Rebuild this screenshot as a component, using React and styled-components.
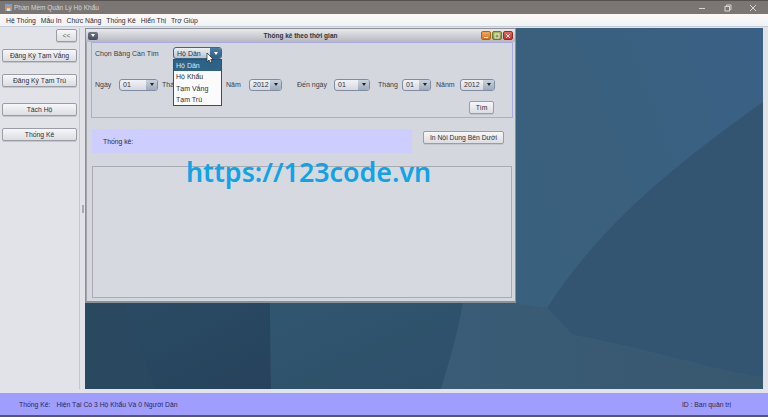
import React from 'react';
import styled, { createGlobalStyle } from 'styled-components';

const GlobalStyle = createGlobalStyle`
  html, body { margin: 0; padding: 0; width: 768px; height: 417px; overflow: hidden; }
  body { font-family: "Liberation Sans", Arial, sans-serif; background: #e4e5ea; }
  * { box-sizing: border-box; }
`;

const Frame = styled.div`
  width: 768px;
  height: 417px;
  position: relative;
  display: flex;
  flex-direction: column;
  background: #e2e3e8;
  color: #2b2f3a;
  font-size: 6.8px;
`;

const TitleBar = styled.div`
  height: 14px;
  flex: none;
  background: #7b7674;
  border-top: 1px solid #55514f;
  display: flex;
  align-items: center;
  padding: 0 11px 0 5px;
  gap: 2px;
  color: #d8d4d1;
`;

const AppTitle = styled.span`
  flex: 1;
  font-size: 6.5px;
`;

const WinIcons = styled.div`
  display: flex;
  align-items: center;
  gap: 17.5px;
  color: #d6d4d2;
`;

const MenuBar = styled.div`
  height: 13px;
  flex: none;
  background: linear-gradient(#fdf9f7, #f0f2f5);
  display: flex;
  align-items: center;
  gap: 5px;
  padding-left: 6px;
  font-size: 6.8px;
  border-bottom: 1px solid #c3cdd8;
`;

const Body = styled.div`
  flex: 1;
  display: flex;
  min-height: 0;
  padding-top: 1px;
  padding-bottom: 4px;
`;

const Sidebar = styled.div`
  width: 80px;
  flex: none;
  display: flex;
  flex-direction: column;
  align-items: stretch;
  padding: 1px 2px 0 2px;
  border-right: 1px solid #c6c7cc;
`;

const Btn = styled.div`
  display: flex;
  align-items: center;
  justify-content: center;
  background: linear-gradient(#f7f7f9, #dcdde2);
  border: 1px solid #9a9da5;
  border-radius: 2px;
  box-shadow: 0 1px 0 #c4c6cc;
  color: #2b2f3a;
  font-size: 6.8px;
  white-space: nowrap;
`;

const CollapseBtn = styled(Btn)`
  width: 21px;
  height: 13px;
  align-self: flex-end;
  color: #666;
`;

const SideBtn = styled(Btn)`
  height: 13px;
  margin-top: ${p => p.$top}px;
`;

const Splitter = styled.div`
  width: 5px;
  flex: none;
  display: flex;
  align-items: center;
  justify-content: center;
  &::after {
    content: '';
    width: 2px;
    height: 8px;
    background: #a9abb2;
  }
`;

const Desktop = styled.div`
  flex: 1;
  position: relative;
  overflow: hidden;
  margin-right: 5px;
  background: #3a6080;
`;

const Wallpaper = styled.svg`
  position: absolute;
  inset: 0;
  width: 100%;
  height: 100%;
`;

const InnerWindow = styled.div`
  position: absolute;
  left: 0;
  top: 0;
  width: 431px;
  height: 275px;
  background: #d5d7df;
  border: 1px solid #8e9097;
  border-bottom-width: 2px;
  display: flex;
  flex-direction: column;
`;

const InnerTitle = styled.div`
  height: 13px;
  flex: none;
  position: relative;
  background: linear-gradient(#e8e9ed, #b6b8bf);
  display: flex;
  align-items: center;
  justify-content: space-between;
  padding: 0 2px;
`;

const InnerCaption = styled.span`
  position: absolute;
  left: 0;
  right: 0;
  text-align: center;
  font-size: 6.5px;
  font-weight: bold;
  color: #30333b;
`;

const SysMenu = styled.div`
  width: 10px;
  height: 8px;
  border-radius: 2px;
  background: linear-gradient(#6f7686, #474d5c);
  display: flex;
  align-items: center;
  justify-content: center;
  &::after {
    content: '';
    border: 2.5px solid transparent;
    border-top: 3px solid #fff;
    border-bottom: 0;
  }
`;

const CaptionButtons = styled.div`
  display: flex;
  gap: 1px;
  z-index: 1;
`;

const CaptionBtn = styled.div`
  width: 10px;
  height: 9px;
  border-radius: 2px;
  border: 1px solid ${p => p.$edge};
  background: ${p => p.$bg};
  display: flex;
  align-items: center;
  justify-content: center;
  color: #f4f0e8;
`;

const InnerBody = styled.div`
  flex: 1;
  min-height: 0;
  display: flex;
  flex-direction: column;
  padding: 0 2px 3px 4px;
  border-left: 1px solid #a3a5ac;
`;

const FormPanel = styled.div`
  height: 76px;
  flex: none;
  position: relative;
  border: 1px solid #a9abdc;
  padding: 0 18px 0 3px;
  display: flex;
  flex-direction: column;
`;

const PickRow = styled.div`
  display: flex;
  align-items: center;
  height: 13px;
  margin-top: 4px;
`;

const DateRow = styled.div`
  display: flex;
  align-items: center;
  height: 13px;
  margin-top: 18px;
`;

const Label = styled.span`
  font-size: 7px;
  color: #3a3e48;
  white-space: nowrap;
  width: ${p => (p.$w ? `${p.$w}px` : 'auto')};
  padding-left: ${p => p.$pad || 0}px;
  flex: none;
`;

const Combo = styled.div`
  width: ${p => p.$w}px;
  height: 12px;
  flex: none;
  display: flex;
  align-items: center;
  justify-content: space-between;
  padding-left: 3px;
  border: 1px solid #7f8da3;
  border-radius: 3px;
  background: linear-gradient(#f2f3f6, #d6d8de);
  font-size: 7px;
  color: #2f333d;
  overflow: hidden;
`;

const ComboArrow = styled.span`
  width: 11px;
  height: 100%;
  flex: none;
  display: flex;
  align-items: center;
  justify-content: center;
  background: linear-gradient(#c9d1dc, #9fabbc);
  &::after {
    content: '';
    border: 2.5px solid transparent;
    border-top: 3px solid #20242c;
    border-bottom: 0;
  }
`;

const OpenCombo = styled(Combo)`
  position: absolute;
  left: 81px;
  top: 4px;
  border-color: #3d6482;
  background: linear-gradient(#eef0f3, #b9c4d0);
  z-index: 3;
`;

const OpenArrow = styled(ComboArrow)`
  background: linear-gradient(#4b7da3, #2c5f86);
  &::after {
    border-top-color: #fff;
  }
`;

const DropList = styled.div`
  position: absolute;
  left: 81px;
  top: 16px;
  width: 49px;
  background: #fbfbfc;
  border: 1px solid #454a55;
  z-index: 3;
  font-size: 7px;
`;

const DropItem = styled.div`
  height: 11.3px;
  line-height: 11.3px;
  padding-left: 2px;
  color: ${p => (p.$active ? '#d8e6f0' : '#2b2f3a')};
  background: ${p => (p.$active ? '#2e6388' : 'transparent')};
`;

const Cursor = styled.svg`
  position: absolute;
  left: 114px;
  top: 9px;
  width: 8px;
  height: 12px;
  z-index: 4;
`;

const FindRow = styled.div`
  display: flex;
  justify-content: flex-end;
  margin-top: 10px;
`;

const FindBtn = styled(Btn)`
  width: 25px;
  height: 13px;
`;

const StatRow = styled.div`
  display: flex;
  align-items: flex-start;
  margin: 11px 0 0 1px;
  flex: none;
`;

const StatBox = styled.div`
  width: 320px;
  height: 24px;
  background: #cecdff;
  display: flex;
  align-items: center;
  padding-left: 11px;
  font-size: 6.8px;
`;

const PrintBtn = styled(Btn)`
  width: 81px;
  height: 13px;
  margin: 2px 0 0 11px;
`;

const ResultBox = styled.div`
  flex: 1;
  margin: 13px 1px 0 1px;
  border: 1px solid #a9abb1;
  background: #d7d9e1;
`;

const Watermark = styled.div`
  position: absolute;
  left: 186px;
  top: 153px;
  font-family: "Noto Sans", "Open Sans", sans-serif;
  font-size: 26.8px;
  font-weight: 600;
  color: #0ea4e6;
  white-space: nowrap;
  z-index: 10;
`;

const StatusBar = styled.div`
  height: 22px;
  flex: none;
  background: #9f9dfd;
  display: flex;
  align-items: center;
  justify-content: space-between;
  padding: 0 37px 0 19px;
  font-size: 6.8px;
  color: #2a2b52;
`;

const StatusLeft = styled.div`
  display: flex;
  gap: 6px;
`;

const BottomEdge = styled.div`
  height: 2px;
  flex: none;
  background: #55566e;
`;

const AppIcon = () => (
  <svg width="7" height="7" viewBox="0 0 8 8">
    <rect width="8" height="8" fill="#7f9fc4" />
    <path d="M1 6 L4 1 L7 6 Z" fill="#e8893a" />
    <rect x="2" y="5" width="4" height="3" fill="#e9e3d6" />
  </svg>
);

const Select = ({ value, w }) => (
  <Combo $w={w}>
    {value}
    <ComboArrow />
  </Combo>
);

export default function App() {
  return (
    <Frame>
      <GlobalStyle />
      <Watermark>https://123code.vn</Watermark>
      <TitleBar>
        <AppIcon />
        <AppTitle>Phần Mềm Quản Lý Hộ Khẩu</AppTitle>
        <WinIcons>
          <svg width="8" height="8" viewBox="0 0 8 8"><path d="M1 4.5h6" stroke="currentColor" strokeWidth="1" /></svg>
          <svg width="8" height="8" viewBox="0 0 8 8" fill="none" stroke="currentColor"><rect x="1" y="2.5" width="4.5" height="4.5" /><path d="M2.5 2.5V1H7v4.5H5.5" /></svg>
          <svg width="8" height="8" viewBox="0 0 8 8"><path d="M1 1l6 6M7 1L1 7" stroke="currentColor" strokeWidth="1" /></svg>
        </WinIcons>
      </TitleBar>
      <MenuBar>
        <span>Hệ Thống</span>
        <span>Mẫu In</span>
        <span>Chức Năng</span>
        <span>Thống Kê</span>
        <span>Hiển Thị</span>
        <span>Trợ Giúp</span>
      </MenuBar>
      <Body>
        <Sidebar>
          <CollapseBtn>&lt;&lt;</CollapseBtn>
          <SideBtn $top={7}>Đăng Ký Tạm Vắng</SideBtn>
          <SideBtn $top={12}>Đăng Ký Tạm Trú</SideBtn>
          <SideBtn $top={16}>Tách Hộ</SideBtn>
          <SideBtn $top={12}>Thống Kê</SideBtn>
        </Sidebar>
        <Splitter />
        <Desktop>
          <Wallpaper viewBox="0 0 678 361" preserveAspectRatio="none">
            <defs>
              <linearGradient id="wallBase" x1="0" y1="0.2" x2="1" y2="0">
                <stop offset="0" stopColor="#39607c" />
                <stop offset="0.7" stopColor="#3a607e" />
                <stop offset="1" stopColor="#3b6086" />
              </linearGradient>
              <linearGradient id="wallMid" x1="0" y1="0" x2="1" y2="1">
                <stop offset="0" stopColor="#31566f" />
                <stop offset="1" stopColor="#2e4f69" />
              </linearGradient>
              <linearGradient id="wallLeft" x1="0" y1="0" x2="1" y2="1">
                <stop offset="0" stopColor="#2a4c64" />
                <stop offset="1" stopColor="#27425c" />
              </linearGradient>
              <linearGradient id="wallBand" x1="0" y1="0" x2="1" y2="0">
                <stop offset="0" stopColor="#3a5c76" />
                <stop offset="1" stopColor="#38586f" />
              </linearGradient>
            </defs>
            <rect width="678" height="361" fill="url(#wallBase)" />
            <path d="M678 74C600 130 520 190 462 280L488 307C560 320 620 340 678 350Z" fill="#335572" />
            <path d="M378 275C372 310 362 340 356 361H678V350C620 340 560 320 488 307L462 280L430 275Z" fill="url(#wallBand)" />
            <path d="M185 275H378C372 310 362 340 356 361H186Z" fill="url(#wallMid)" />
            <path d="M0 275H185L186 361H0Z" fill="url(#wallLeft)" />
            <path d="M0 275H40L70 361H0Z" fill="#2a4960" />
          </Wallpaper>
          <InnerWindow>
            <InnerTitle>
              <SysMenu />
              <InnerCaption>Thống kê theo thời gian</InnerCaption>
              <CaptionButtons>
                <CaptionBtn $edge="#a8641e" $bg="linear-gradient(#f2a65a, #d9761f)">
                  <svg width="6" height="6" viewBox="0 0 6 6"><path d="M1 4.5h4" stroke="currentColor" /></svg>
                </CaptionBtn>
                <CaptionBtn $edge="#6c7a2a" $bg="linear-gradient(#a9b85a, #7f9130)">
                  <svg width="6" height="6" viewBox="0 0 6 6" fill="none"><rect x="1" y="1" width="4" height="4" stroke="currentColor" /></svg>
                </CaptionBtn>
                <CaptionBtn $edge="#9c2a24" $bg="linear-gradient(#e5675c, #c5342b)">
                  <svg width="6" height="6" viewBox="0 0 6 6"><path d="M1 1l4 4M5 1L1 5" stroke="currentColor" /></svg>
                </CaptionBtn>
              </CaptionButtons>
            </InnerTitle>
            <InnerBody>
              <FormPanel>
                <PickRow>
                  <Label>Chọn Bảng Cần Tìm</Label>
                </PickRow>
                <OpenCombo $w={49}>
                  Hộ Dân
                  <OpenArrow />
                </OpenCombo>
                <Cursor viewBox="0 0 8 12">
                  <path d="M1 1V10L3 8L4.5 11L6 10.3L4.7 7.5H7.4Z" fill="#fff" stroke="#222" strokeWidth="0.7" />
                </Cursor>
                <DropList>
                  <DropItem $active>Hộ Dân</DropItem>
                  <DropItem>Hộ Khẩu</DropItem>
                  <DropItem>Tạm Vắng</DropItem>
                  <DropItem>Tạm Trú</DropItem>
                </DropList>
                <DateRow>
                  <Label $w={24}>Ngày</Label>
                  <Select value="01" w={39} />
                  <Label $w={68} $pad={4}>Tháng</Label>
                  <Label $w={23}>Năm</Label>
                  <Select value="2012" w={33} />
                  <Label $w={52} $pad={15}>Đến ngày</Label>
                  <Select value="01" w={36} />
                  <Label $w={32} $pad={8}>Tháng</Label>
                  <Select value="01" w={29} />
                  <Label $w={29} $pad={5}>Nănm</Label>
                  <Select value="2012" w={35} />
                </DateRow>
                <FindRow>
                  <FindBtn>Tìm</FindBtn>
                </FindRow>
              </FormPanel>
              <StatRow>
                <StatBox>Thống kê:</StatBox>
                <PrintBtn>In Nội Dung Bên Dưới</PrintBtn>
              </StatRow>
              <ResultBox />
            </InnerBody>
          </InnerWindow>
        </Desktop>
      </Body>
      <StatusBar>
        <StatusLeft>
          <span>Thống Kê:</span>
          <span>Hiện Tại Có 3 Hộ Khẩu Và 0 Người Dân</span>
        </StatusLeft>
        <span>ID : Ban quản trị</span>
      </StatusBar>
      <BottomEdge />
    </Frame>
  );
}
